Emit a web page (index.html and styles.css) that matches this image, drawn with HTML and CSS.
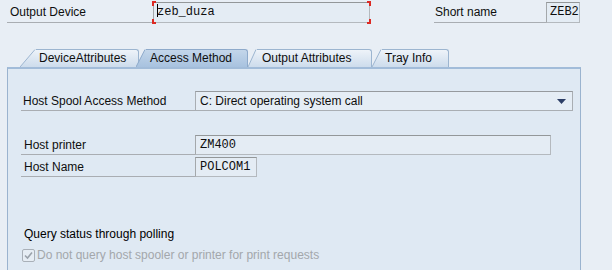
FILE: index.html
```html
<!DOCTYPE html>
<html>
<head>
<meta charset="utf-8">
<link rel="stylesheet" href="styles.css">
</head>
<body>
<div class="top">
  <div class="lbl lbl-out">Output Device</div>
  <div class="focus">
    <div class="inp inp-out mono"><span class="cursor"></span>zeb_duza</div>
    <i class="mark ml"></i><i class="mark mr"></i>
  </div>
  <div class="lbl lbl-short">Short name</div>
  <div class="inp inp-short mono">ZEB2</div>
</div>

<div class="tabs">
  <div class="tab t1">
    <svg class="slant" width="16" height="18" viewBox="0 0 16 18"><defs><linearGradient id="g1" x1="0" y1="0" x2="0" y2="18" gradientUnits="userSpaceOnUse"><stop offset="0" stop-color="#eef3f9"/><stop offset="1" stop-color="#cddcec"/></linearGradient></defs><polygon points="0,18 15,0.5 16,0.5 16,18" fill="url(#g1)"/><line x1="0" y1="18" x2="15" y2="0.5" stroke="#9cb5d0" stroke-width="1"/></svg>
    <div class="tab-body">DeviceAttributes</div>
  </div>
  <div class="tab t2 active">
    <svg class="slant" width="10" height="18" viewBox="0 0 10 18"><defs><linearGradient id="g2" x1="0" y1="0" x2="0" y2="18" gradientUnits="userSpaceOnUse"><stop offset="0" stop-color="#c3d6ea"/><stop offset="1" stop-color="#a8c2df"/></linearGradient></defs><polygon points="0,18 9,0.5 10,0.5 10,18" fill="url(#g2)"/><line x1="0" y1="18" x2="9" y2="0.5" stroke="#8eaacb" stroke-width="1"/></svg>
    <div class="tab-body">Access Method</div>
  </div>
  <div class="tab t3">
    <svg class="slant" width="9" height="18" viewBox="0 0 9 18"><defs><linearGradient id="g3" x1="0" y1="0" x2="0" y2="18" gradientUnits="userSpaceOnUse"><stop offset="0" stop-color="#eef3f9"/><stop offset="1" stop-color="#cddcec"/></linearGradient></defs><polygon points="0,18 8,0.5 9,0.5 9,18" fill="url(#g3)"/><line x1="0" y1="18" x2="8" y2="0.5" stroke="#9cb5d0" stroke-width="1"/></svg>
    <div class="tab-body">Output Attributes</div>
  </div>
  <div class="tab t4">
    <svg class="slant" width="10" height="18" viewBox="0 0 10 18"><defs><linearGradient id="g4" x1="0" y1="0" x2="0" y2="18" gradientUnits="userSpaceOnUse"><stop offset="0" stop-color="#eef3f9"/><stop offset="1" stop-color="#cddcec"/></linearGradient></defs><polygon points="0,18 9,0.5 10,0.5 10,18" fill="url(#g4)"/><line x1="0" y1="18" x2="9" y2="0.5" stroke="#9cb5d0" stroke-width="1"/></svg>
    <div class="tab-body">Tray Info</div>
  </div>
</div>

<div class="panel">
  <div class="row r1">
    <div class="plbl pl1">Host Spool Access Method</div>
    <div class="dropdown"><span>C: Direct operating system call</span>
      <svg class="arrow" width="9" height="5" viewBox="0 0 9 5"><polygon points="0,0 9,0 4.5,5" fill="#2c3e66"/></svg>
    </div>
  </div>
  <div class="row r2">
    <div class="plbl pl2">Host printer</div>
    <div class="inp inp-printer mono">ZM400</div>
  </div>
  <div class="row r3">
    <div class="plbl pl2">Host Name</div>
    <div class="inp inp-host mono">POLCOM1</div>
  </div>
  <div class="query">Query status through polling</div>
  <div class="check">
    <svg class="cb" width="13" height="13" viewBox="0 0 13 13"><rect x="0.5" y="0.5" width="12" height="12" rx="1.5" fill="#e6edf4" stroke="#a9b0b8"/><polyline points="3,6.5 5.5,9 10,3.5" fill="none" stroke="#9aa2ab" stroke-width="1.6"/></svg>
    <span>Do not query host spooler or printer for print requests</span>
  </div>
</div>
</body>
</html>
```
FILE: styles.css
```css
html, body {
  margin: 0;
  padding: 0;
}
body {
  background: #e8eef5;
  font-family: "Liberation Sans", Arial, sans-serif;
  font-size: 12px;
  color: #0e0e0e;
  width: 612px;
  height: 270px;
  overflow: hidden;
}
.mono {
  font-family: "Liberation Mono", "Courier New", monospace;
  font-size: 12px;
}
.top {
  display: flex;
  align-items: flex-start;
  padding: 2px 0 0 7px;
}
.lbl {
  box-sizing: border-box;
  height: 21px;
  line-height: 21px;
  border-bottom: 1px solid #a9adb2;
}
.lbl-out {
  width: 146px;
  padding-left: 3px;
}
.lbl-short {
  width: 112px;
  padding-left: 1px;
  margin-left: 64px;
}
.inp {
  box-sizing: border-box;
  height: 21px;
  line-height: 19px;
  background: #e4ecf4;
  border: 1px solid #b4b9be;
  border-top-color: #939799;
  border-left-color: #a4a8ab;
  padding-left: 3px;
  color: #0e0e0e;
  white-space: nowrap;
}
.focus {
  position: relative;
  width: 217px;
}
.inp-out {
  width: 217px;
}
.cursor {
  display: inline-block;
  width: 1px;
  height: 13px;
  background: #000;
  vertical-align: -2px;
  margin-right: -1px;
}
.inp-short {
  width: 34px;
  padding-left: 3px;
}
.mark {
  position: absolute;
  top: -1px;
  width: 4px;
  height: 23px;
  box-sizing: border-box;
}
.mark::before, .mark::after {
  content: "";
  position: absolute;
  width: 4px;
  height: 5px;
  border: 0 solid #dc2a24;
  box-sizing: border-box;
}
.mark::before { top: 0; border-top-width: 2px; }
.mark::after { bottom: 0; border-bottom-width: 2px; }
.ml { left: -1px; }
.ml::before, .ml::after { left: 0; border-left-width: 2px; }
.mr { right: -1px; }
.mr::before, .mr::after { right: 0; border-right-width: 2px; }

.tabs {
  display: flex;
  align-items: flex-end;
  margin-top: 26px;
  padding-left: 20px;
  height: 18px;
}
.tab {
  display: flex;
  height: 18px;
  position: relative;
}
.slant {
  display: block;
  flex: none;
}
.tab-body {
  box-sizing: border-box;
  height: 18px;
  line-height: 17px;
  border-top: 1px solid #9cb5d0;
  border-right: 1px solid #9cb5d0;
  border-radius: 0 3px 0 0;
  background: linear-gradient(#eef3f9, #cddcec);
  padding-left: 3px;
  white-space: nowrap;
}
.t1 .tab-body { width: 103px; }
.t2 { margin-left: -3px; z-index: 2; }
.t2 .tab-body { width: 102px; padding-left: 4px; }
.t3 .tab-body { width: 115px; padding-left: 5px; }
.t4 .tab-body { width: 67px; }
.active .tab-body {
  background: linear-gradient(#c3d6ea, #a8c2df);
  border-color: #8eaacb;
}

.panel {
  box-sizing: border-box;
  margin-left: 7px;
  width: 574px;
  height: 210px;
  background: #dfe9f3;
  border-top: 2px solid #a2bcd9;
  border-left: 1px solid #9ab3cf;
  border-right: 1px solid #9ab3cf;
  padding-left: 13px;
  display: flex;
  flex-direction: column;
  align-items: flex-start;
}
.row {
  display: flex;
  align-items: flex-start;
}
.r1 { margin-top: 22px; }
.r2 { margin-top: 24px; }
.r3 { margin-top: 2px; }
.plbl {
  box-sizing: border-box;
  width: 174px;
  height: 20px;
  line-height: 20px;
  border-bottom: 1px solid #a9adb2;
}
.pl1 { padding-left: 2px; }
.pl2 { padding-left: 3px; }
.dropdown {
  box-sizing: border-box;
  width: 378px;
  height: 20px;
  line-height: 18px;
  background: #e5edf5;
  border: 1px solid #a9aeb3;
  border-top-color: #969a9e;
  padding: 0 6px 0 4px;
  display: flex;
  align-items: center;
  justify-content: space-between;
}
.dropdown span { line-height: 18px; }
.arrow { display: block; }
.r2 .inp, .r3 .inp {
  height: 20px;
  line-height: 18px;
  padding-left: 4px;
}
.inp-printer { width: 356px; }
.inp-host { width: 62px; }
.query {
  margin-top: 49px;
  padding-left: 3px;
  line-height: 16px;
  color: #000;
}
.check {
  margin-top: 5px;
  display: flex;
  align-items: center;
  height: 16px;
  padding-left: 1px;
  color: #a3a7ab;
}
.cb {
  display: block;
  margin-right: 2px;
}
```
